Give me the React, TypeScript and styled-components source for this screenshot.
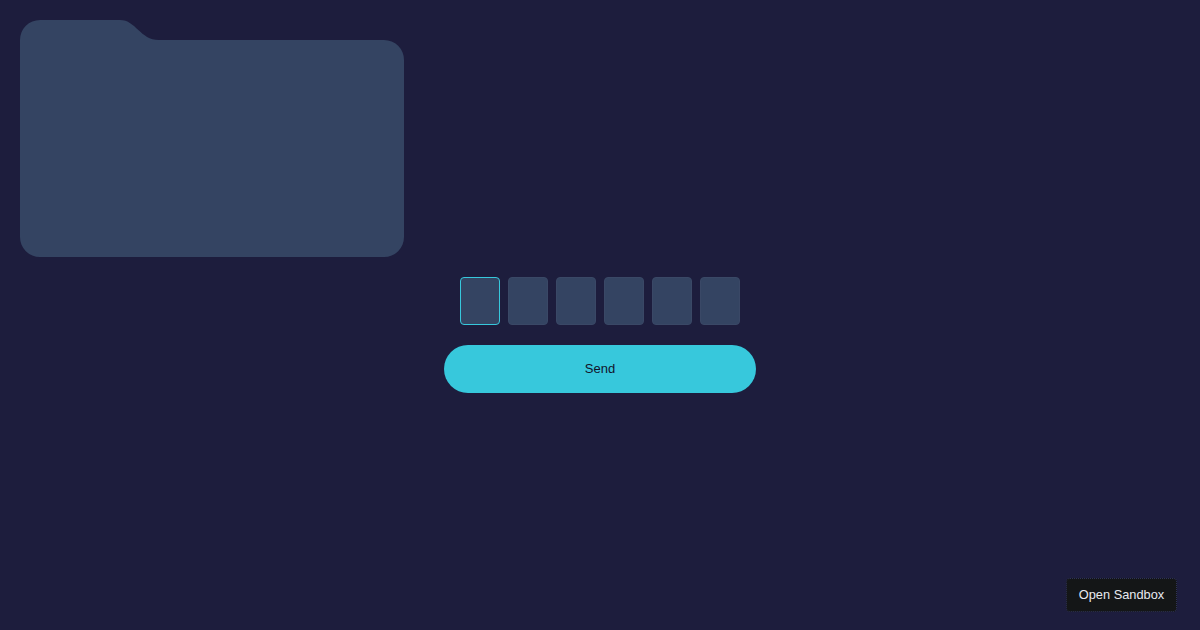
import styled, { createGlobalStyle } from "styled-components";

const CODE_SLOTS = [0, 1, 2, 3, 4, 5];

const GlobalStyle = createGlobalStyle`
  html, body {
    margin: 0;
    height: 100%;
    background: #1d1d3d;
  }
`;

const App = () => {
  return (
    <Page>
      <GlobalStyle />
      <Folder viewBox="0 0 384 237" aria-hidden="true">
        <path d="M0 20a20 20 0 0 1 20-20H100C116 0 120 20 139 20H364a20 20 0 0 1 20 20V217a20 20 0 0 1-20 20H20a20 20 0 0 1-20-20Z" />
      </Folder>
      <Form>
        <CodeRow>
          {CODE_SLOTS.map((slot) => (
            <CodeBox key={slot} $active={slot === 0} />
          ))}
        </CodeRow>
        <SendButton>Send</SendButton>
      </Form>
      <SandboxLink>Open Sandbox</SandboxLink>
    </Page>
  );
};

export default App;

const Page = styled.div`
  position: relative;
  box-sizing: border-box;
  width: 1200px;
  height: 630px;
  padding: 20px;
  overflow: hidden;
  background: #1d1d3d;
  font-family: "Liberation Sans", Arial, sans-serif;
`;

const Folder = styled.svg`
  display: block;
  width: 384px;
  height: 237px;
  fill: #344462;
`;

const Form = styled.div`
  display: flex;
  flex-direction: column;
  align-items: center;
  gap: 20px;
  margin-top: 20px;
`;

const CodeRow = styled.div`
  display: flex;
  gap: 8px;
`;

const CodeBox = styled.div<{ $active: boolean }>`
  box-sizing: border-box;
  width: 40px;
  height: 48px;
  background: #344462;
  border: 1px solid ${({ $active }) => ($active ? "#37c8dc" : "#3a4866")};
  border-radius: 4px;
`;

const SendButton = styled.button`
  width: 312px;
  height: 48px;
  padding: 0 0 2px;
  background: #37c8dc;
  border: none;
  border-radius: 24px;
  color: #12132b;
  font-family: inherit;
  font-size: 13px;
`;

const SandboxLink = styled.a`
  position: absolute;
  right: 23px;
  bottom: 18px;
  box-sizing: border-box;
  display: flex;
  align-items: center;
  justify-content: center;
  width: 111px;
  height: 34px;
  padding-bottom: 2px;
  background: #141617;
  border: 1px dotted #2f3358;
  border-radius: 4px;
  color: #e8eaf0;
  font-size: 12.8px;
`;
